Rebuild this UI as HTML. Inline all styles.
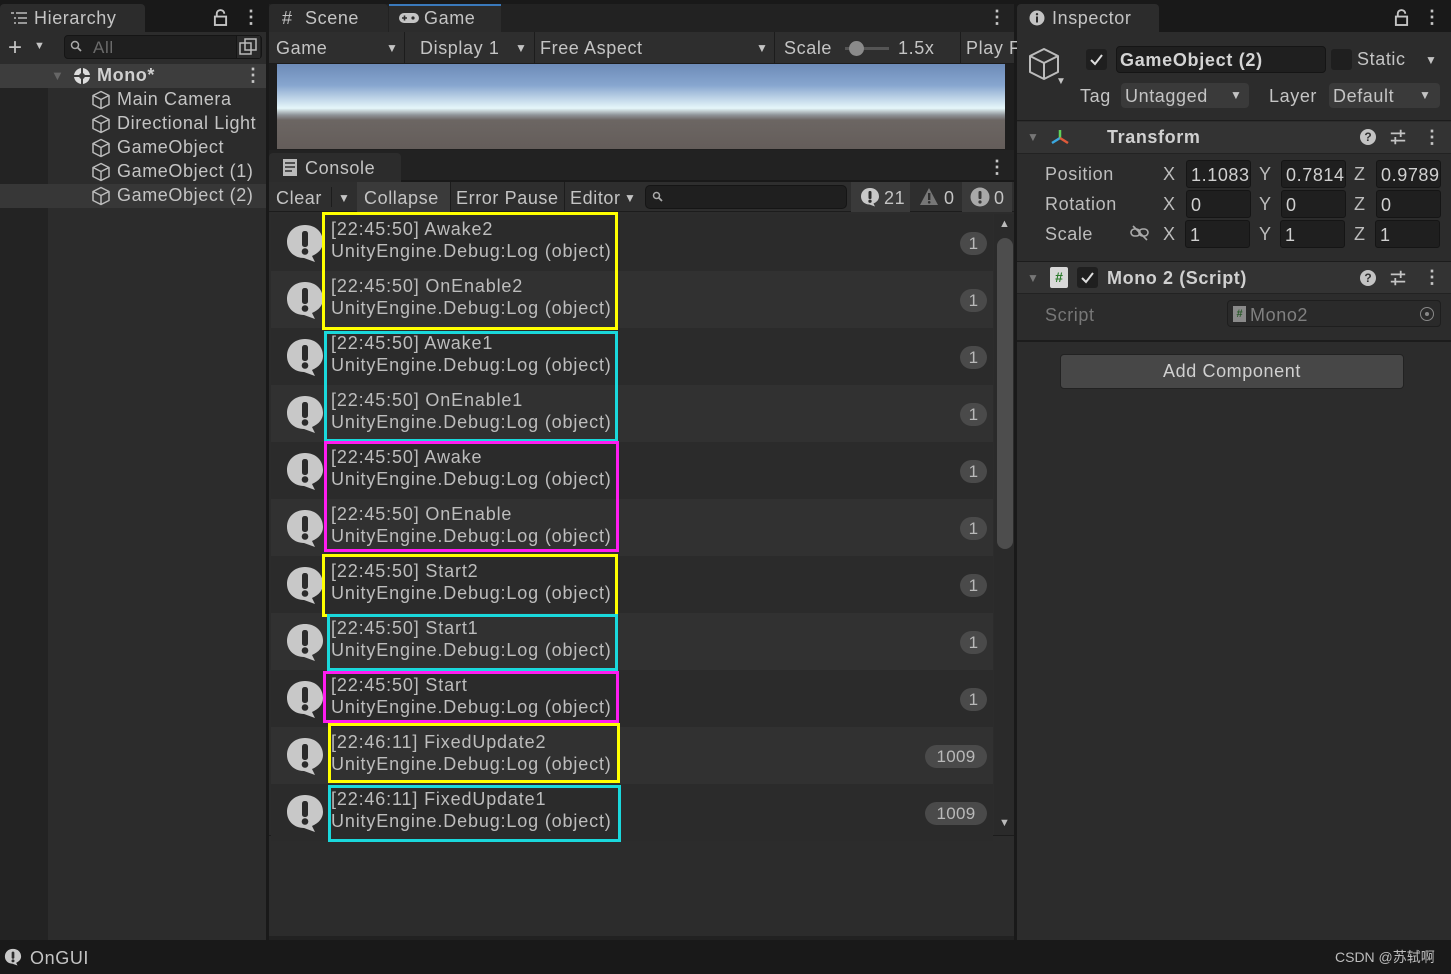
<!DOCTYPE html>
<html><head><meta charset="utf-8"><style>
*{margin:0;padding:0;box-sizing:border-box}
body{width:1451px;height:974px;background:#191919;position:relative;overflow:hidden;font-family:"Liberation Sans","Noto Sans CJK SC",sans-serif;color:#c4c4c4;font-size:18px;letter-spacing:.6px}
.a{position:absolute}
.t{position:absolute;white-space:nowrap;line-height:1}
.cube{position:absolute;width:20px;height:20px}
.row{position:absolute;left:271px;width:722px;height:57px}
.ic{position:absolute;left:14px;top:9px}
.l1,.l2{position:absolute;left:60px;white-space:nowrap;font-size:18px;color:#bdbdbd;letter-spacing:.85px;line-height:1}
.l1{top:6px}.l2{top:28px}
.cnt{position:absolute;top:18px;height:23px;border-radius:12px;background:#4a4a4a;color:#b9b9b9;font-size:17px;text-align:center;line-height:23px;letter-spacing:.3px}
.box{position:absolute;border:3px solid}
.fld{position:absolute;background:#1f1f1f;border:1px solid #151515;border-radius:3px;height:28px;font-size:18px;color:#d0d0d0;padding:4px 0 0 4px}
.lab{position:absolute;font-size:18px;color:#bdbdbd;white-space:nowrap}
</style></head><body>
<svg width="0" height="0" style="position:absolute"><defs>
<symbol id="cube" viewBox="0 0 20 20"><path d="M10 1.5 L18 5.5 L18 14.5 L10 18.5 L2 14.5 L2 5.5 Z M2 5.5 L10 9.5 L18 5.5 M10 9.5 L10 18.5" fill="none" stroke="#bcbcbc" stroke-width="1.5" stroke-linejoin="round"/></symbol>
<symbol id="info" viewBox="0 0 40 40"><path d="M20 2 C9 2 2 9.5 2 19 C2 28 9 35 19 35 L30 39 L27 33 C34 30 38 25 38 19 C38 9.5 31 2 20 2Z" fill="#c8c8c8"/><rect x="17" y="8" width="6" height="16" rx="2.5" fill="#2b2b2b"/><circle cx="20" cy="28.5" r="3.3" fill="#2b2b2b"/></symbol>
<symbol id="lock" viewBox="0 0 16 18"><path d="M4 8 V5 A4 4 0 0 1 12 5" fill="none" stroke="#c4c4c4" stroke-width="2"/><rect x="2" y="8" width="12" height="9" fill="none" stroke="#c4c4c4" stroke-width="2"/></symbol>
<symbol id="chk" viewBox="0 0 21 21"><rect width="21" height="21" rx="3" fill="#1f1f1f"/><path d="M5 11 L9 15 L16 6" fill="none" stroke="#ddd" stroke-width="2"/></symbol>
<symbol id="sl" viewBox="0 0 20 20"><path d="M2 6 H18 M2 14 H18" stroke="#c4c4c4" stroke-width="2"/><path d="M13 2 V10 M7 10 V18" stroke="#c4c4c4" stroke-width="2"/></symbol>
</defs></svg>

<!-- Hierarchy panel -->
<div class="a" style="left:0;top:32px;width:266px;height:908px;background:#2c2c2c"></div>
<div class="a" style="left:0;top:88px;width:48px;height:852px;background:#232323"></div>
<div class="a" style="left:0;top:4px;width:145px;height:28px;background:#2c2c2c;border-radius:4px 4px 0 0"></div>
<svg class="a" style="left:11px;top:12px" width="16" height="12"><path d="M0 1H3M5 1H16M3 6H5M7 6H16M3 11H5M7 11H16" stroke="#bbb" stroke-width="1.6"/></svg>
<div class="t" style="left:34px;top:9px;color:#c4c4c4">Hierarchy</div>
<svg class="a" style="left:213px;top:9px" width="15" height="17"><use href="#lock"/></svg>
<div class="t" style="left:242px;top:8px;font-weight:bold">⋮</div>
<div class="t" style="left:8px;top:36px;font-size:24px;color:#c4c4c4">+</div>
<div class="t" style="left:34px;top:41px;font-size:11px;color:#c4c4c4">▼</div>
<div class="a" style="left:64px;top:35px;width:198px;height:24px;background:#1f1f1f;border:1px solid #151515;border-radius:4px"></div>
<svg class="a" style="left:70px;top:40px" width="14" height="14"><circle cx="5" cy="5" r="3.5" fill="none" stroke="#aaa" stroke-width="1.5"/><path d="M7.5 7.5 L11 11" stroke="#aaa" stroke-width="1.8"/></svg>
<div class="t" style="left:93px;top:39px;color:#6b6b6b;font-size:17px">All</div>
<div class="a" style="left:236px;top:36px;width:24px;height:22px;background:#2a2a2a;border-left:1px solid #151515"></div>
<svg class="a" style="left:239px;top:38px" width="19" height="18"><rect x="1" y="5" width="11" height="11" fill="none" stroke="#bbb" stroke-width="1.5"/><rect x="6" y="1" width="11" height="11" fill="none" stroke="#bbb" stroke-width="1.5"/></svg>
<div class="a" style="left:0;top:64px;width:266px;height:24px;background:#3d3d3d"></div>
<div class="t" style="left:51px;top:69px;font-size:13px;color:#666">▼</div>
<svg class="a" style="left:72px;top:66px" width="20" height="20" viewBox="0 0 20 20"><circle cx="10" cy="10" r="8" fill="#ddd"/><path d="M10 2V18M2 10H18" stroke="#3d3d3d" stroke-width="2"/><circle cx="10" cy="10" r="3" fill="#3d3d3d"/></svg>
<div class="t" style="left:97px;top:66px;font-weight:bold;color:#d0d0d0">Mono*</div>
<div class="t" style="left:244px;top:66px;font-weight:bold">⋮</div>
<div class="a" style="left:0;top:184px;width:266px;height:24px;background:#373737"></div>
<svg class="cube" style="left:91px;top:90px"><use href="#cube"/></svg><div class="t" style="left:117px;top:90px">Main Camera</div>
<svg class="cube" style="left:91px;top:114px"><use href="#cube"/></svg><div class="t" style="left:117px;top:114px">Directional Light</div>
<svg class="cube" style="left:91px;top:138px"><use href="#cube"/></svg><div class="t" style="left:117px;top:138px">GameObject</div>
<svg class="cube" style="left:91px;top:162px"><use href="#cube"/></svg><div class="t" style="left:117px;top:162px">GameObject (1)</div>
<svg class="cube" style="left:91px;top:186px"><use href="#cube"/></svg><div class="t" style="left:117px;top:186px">GameObject (2)</div>

<!-- Game panel -->
<div class="a" style="left:269px;top:4px;width:745px;height:28px;background:#222"></div>
<div class="a" style="left:269px;top:4px;width:119px;height:28px;background:#2a2a2a;border-radius:4px 4px 0 0"></div>
<div class="t" style="left:282px;top:9px">#</div><div class="t" style="left:305px;top:9px">Scene</div>
<div class="a" style="left:389px;top:4px;width:112px;height:28px;background:#2c2c2c;border-top:2px solid #3a79bb"></div>
<svg class="a" style="left:398px;top:12px" width="22" height="12"><rect x="1" y="1" width="20" height="10" rx="5" fill="#c4c4c4"/><path d="M4 6H9M6.5 3.5V8.5" stroke="#2c2c2c" stroke-width="1.6"/><circle cx="15" cy="6" r="1.6" fill="#2c2c2c"/></svg>
<div class="t" style="left:424px;top:9px">Game</div>
<div class="t" style="left:988px;top:8px;font-weight:bold">⋮</div>
<div class="a" style="left:269px;top:32px;width:745px;height:32px;background:#2e2e2e;border-bottom:1px solid #1c1c1c"></div>
<div class="t" style="left:276px;top:39px">Game</div><div class="t" style="left:386px;top:42px;font-size:12px">▼</div>
<div class="a" style="left:404px;top:32px;width:1px;height:32px;background:#1c1c1c"></div>
<div class="t" style="left:420px;top:39px">Display 1</div><div class="t" style="left:515px;top:42px;font-size:12px">▼</div>
<div class="a" style="left:534px;top:32px;width:1px;height:32px;background:#1c1c1c"></div>
<div class="t" style="left:540px;top:39px">Free Aspect</div><div class="t" style="left:756px;top:42px;font-size:12px">▼</div>
<div class="a" style="left:774px;top:32px;width:1px;height:32px;background:#1c1c1c"></div>
<div class="t" style="left:784px;top:39px">Scale</div>
<div class="a" style="left:845px;top:47px;width:44px;height:3px;background:#555"></div>
<div class="a" style="left:849px;top:41px;width:15px;height:15px;border-radius:50%;background:#8a8a8a"></div>
<div class="t" style="left:898px;top:39px">1.5x</div>
<div class="a" style="left:960px;top:32px;width:1px;height:32px;background:#1c1c1c"></div>
<div class="t" style="left:966px;top:39px">Play F</div>
<div class="a" style="left:269px;top:64px;width:745px;height:86px;background:#1e1e1e"></div>
<div class="a" style="left:277px;top:64px;width:728px;height:85px;background:linear-gradient(180deg,#6d8bb8 0%,#87a6cf 25%,#c4d9ea 42%,#e6f7fa 52%,#8f9498 60%,#6c6663 66%,#645d5a 100%)"></div>

<!-- Console -->
<div class="a" style="left:269px;top:150px;width:745px;height:30px;background:#222"></div>
<div class="a" style="left:269px;top:153px;width:132px;height:29px;background:#2c2c2c;border-radius:4px 4px 0 0"></div>
<svg class="a" style="left:283px;top:159px" width="14" height="17"><rect x="0" y="0" width="14" height="17" fill="#bbb"/><path d="M2 4H12M2 8H12M2 12H9" stroke="#2c2c2c" stroke-width="1.5"/></svg>
<div class="t" style="left:305px;top:159px">Console</div>
<div class="t" style="left:988px;top:158px;font-weight:bold">⋮</div>
<div class="a" style="left:269px;top:182px;width:745px;height:30px;background:#2e2e2e;border-bottom:1px solid #1c1c1c"></div>
<div class="t" style="left:276px;top:189px">Clear</div>
<div class="a" style="left:331px;top:187px;width:1px;height:20px;background:#1c1c1c"></div>
<div class="t" style="left:338px;top:192px;font-size:12px">▼</div>
<div class="a" style="left:357px;top:182px;width:93px;height:30px;background:#3a3a3a"></div>
<div class="t" style="left:364px;top:189px">Collapse</div>
<div class="a" style="left:450px;top:182px;width:1px;height:30px;background:#1c1c1c"></div>
<div class="t" style="left:456px;top:189px">Error Pause</div>
<div class="a" style="left:564px;top:182px;width:1px;height:30px;background:#1c1c1c"></div>
<div class="t" style="left:570px;top:189px">Editor</div><div class="t" style="left:624px;top:192px;font-size:12px">▼</div>
<div class="a" style="left:645px;top:185px;width:202px;height:24px;background:#1f1f1f;border:1px solid #151515;border-radius:5px"></div>
<svg class="a" style="left:652px;top:191px" width="12" height="12"><circle cx="4.5" cy="4.5" r="3" fill="none" stroke="#aaa" stroke-width="1.5"/><path d="M6.5 6.5 L10 10" stroke="#aaa" stroke-width="1.8"/></svg>
<div class="a" style="left:851px;top:182px;width:59px;height:30px;background:#3a3a3a"></div>
<svg class="a" style="left:860px;top:187px" width="20" height="20"><use href="#info"/></svg><div class="t" style="left:884px;top:189px">21</div>
<svg class="a" style="left:919px;top:187px" width="20" height="20" viewBox="0 0 20 20"><path d="M10 1 L19 18 L1 18Z" fill="#777"/><rect x="9" y="6" width="2.4" height="7" fill="#2e2e2e"/><circle cx="10.2" cy="15.3" r="1.3" fill="#2e2e2e"/></svg><div class="t" style="left:944px;top:189px">0</div>
<div class="a" style="left:962px;top:182px;width:50px;height:30px;background:#3a3a3a"></div>
<svg class="a" style="left:970px;top:187px" width="20" height="20" viewBox="0 0 20 20"><circle cx="10" cy="10" r="9.5" fill="#a9a9a9"/><rect x="8.5" y="4" width="3" height="8" rx="1.3" fill="#3a3a3a"/><circle cx="10" cy="15" r="1.6" fill="#3a3a3a"/></svg><div class="t" style="left:994px;top:189px">0</div>

<div class="a" style="left:269px;top:212px;width:745px;height:726px;background:#2c2c2c"></div>
<div class="a" style="left:269px;top:835px;width:745px;height:1px;background:#1c1c1c"></div>
<div class="a" style="left:269px;top:936px;width:745px;height:4px;background:#222"></div>

<div class="row" style="top:214px;background:#2b2b2b"><svg class="ic" width="40" height="40"><use href="#info"/></svg><div class="l1">[22:45:50] Awake2</div><div class="l2">UnityEngine.Debug:Log (object)</div><div class="cnt" style="left:689px;width:27px">1</div></div>
<div class="row" style="top:271px;background:#313131"><svg class="ic" width="40" height="40"><use href="#info"/></svg><div class="l1">[22:45:50] OnEnable2</div><div class="l2">UnityEngine.Debug:Log (object)</div><div class="cnt" style="left:689px;width:27px">1</div></div>
<div class="row" style="top:328px;background:#2b2b2b"><svg class="ic" width="40" height="40"><use href="#info"/></svg><div class="l1">[22:45:50] Awake1</div><div class="l2">UnityEngine.Debug:Log (object)</div><div class="cnt" style="left:689px;width:27px">1</div></div>
<div class="row" style="top:385px;background:#313131"><svg class="ic" width="40" height="40"><use href="#info"/></svg><div class="l1">[22:45:50] OnEnable1</div><div class="l2">UnityEngine.Debug:Log (object)</div><div class="cnt" style="left:689px;width:27px">1</div></div>
<div class="row" style="top:442px;background:#2b2b2b"><svg class="ic" width="40" height="40"><use href="#info"/></svg><div class="l1">[22:45:50] Awake</div><div class="l2">UnityEngine.Debug:Log (object)</div><div class="cnt" style="left:689px;width:27px">1</div></div>
<div class="row" style="top:499px;background:#313131"><svg class="ic" width="40" height="40"><use href="#info"/></svg><div class="l1">[22:45:50] OnEnable</div><div class="l2">UnityEngine.Debug:Log (object)</div><div class="cnt" style="left:689px;width:27px">1</div></div>
<div class="row" style="top:556px;background:#2b2b2b"><svg class="ic" width="40" height="40"><use href="#info"/></svg><div class="l1">[22:45:50] Start2</div><div class="l2">UnityEngine.Debug:Log (object)</div><div class="cnt" style="left:689px;width:27px">1</div></div>
<div class="row" style="top:613px;background:#313131"><svg class="ic" width="40" height="40"><use href="#info"/></svg><div class="l1">[22:45:50] Start1</div><div class="l2">UnityEngine.Debug:Log (object)</div><div class="cnt" style="left:689px;width:27px">1</div></div>
<div class="row" style="top:670px;background:#2b2b2b"><svg class="ic" width="40" height="40"><use href="#info"/></svg><div class="l1">[22:45:50] Start</div><div class="l2">UnityEngine.Debug:Log (object)</div><div class="cnt" style="left:689px;width:27px">1</div></div>
<div class="row" style="top:727px;background:#313131"><svg class="ic" width="40" height="40"><use href="#info"/></svg><div class="l1">[22:46:11] FixedUpdate2</div><div class="l2">UnityEngine.Debug:Log (object)</div><div class="cnt" style="left:654px;width:62px">1009</div></div>
<div class="row" style="top:784px;background:#2b2b2b"><svg class="ic" width="40" height="40"><use href="#info"/></svg><div class="l1">[22:46:11] FixedUpdate1</div><div class="l2">UnityEngine.Debug:Log (object)</div><div class="cnt" style="left:654px;width:62px">1009</div></div>

<!-- scrollbar -->
<div class="a" style="left:994px;top:214px;width:20px;height:621px;background:#2a2a2a"></div>
<div class="t" style="left:999px;top:219px;font-size:11px;color:#bbb">▲</div>
<div class="a" style="left:997px;top:238px;width:16px;height:311px;background:#4d4d4d;border-radius:8px"></div>
<div class="t" style="left:999px;top:818px;font-size:11px;color:#bbb">▼</div>

<!-- highlight boxes -->
<div class="box" style="left:322px;top:212px;width:296px;height:118px;border-color:#ffff00"></div>
<div class="box" style="left:324px;top:331px;width:294px;height:111px;border-color:#1ad8dc"></div>
<div class="box" style="left:324px;top:441px;width:295px;height:111px;border-color:#ff1cf0"></div>
<div class="box" style="left:322px;top:554px;width:296px;height:63px;border-color:#ffff00"></div>
<div class="box" style="left:327px;top:614px;width:291px;height:57px;border-color:#1ad8dc"></div>
<div class="box" style="left:323px;top:671px;width:296px;height:52px;border-color:#ff1cf0"></div>
<div class="box" style="left:328px;top:723px;width:292px;height:60px;border-color:#ffff00"></div>
<div class="box" style="left:328px;top:785px;width:293px;height:57px;border-color:#1ad8dc"></div>

<!-- Inspector -->
<div class="a" style="left:1017px;top:32px;width:434px;height:908px;background:#2c2c2c"></div>
<div class="a" style="left:1017px;top:4px;width:142px;height:28px;background:#2c2c2c;border-radius:4px 4px 0 0"></div>
<svg class="a" style="left:1029px;top:10px" width="16" height="16" viewBox="0 0 16 16"><circle cx="8" cy="8" r="7.5" fill="#c4c4c4"/><rect x="7" y="6.5" width="2" height="6" fill="#2c2c2c"/><circle cx="8" cy="4.2" r="1.2" fill="#2c2c2c"/></svg>
<div class="t" style="left:1052px;top:9px">Inspector</div>
<svg class="a" style="left:1394px;top:9px" width="15" height="17"><use href="#lock"/></svg>
<div class="t" style="left:1423px;top:8px;font-weight:bold">⋮</div>
<div class="a" style="left:1017px;top:120px;width:434px;height:1px;background:#1c1c1c"></div>
<svg class="a" style="left:1027px;top:47px" width="34" height="34"><path d="M17 2 L31 9 L31 25 L17 32 L3 25 L3 9 Z M3 9 L17 16 L31 9 M17 16 L17 32" fill="none" stroke="#bcbcbc" stroke-width="2" stroke-linejoin="round"/></svg>
<div class="t" style="left:1056px;top:77px;font-size:10px">▼</div>
<svg class="a" style="left:1086px;top:49px" width="21" height="21"><use href="#chk"/></svg>
<div class="a" style="left:1116px;top:46px;width:210px;height:27px;background:#1f1f1f;border:1px solid #151515;border-radius:4px"></div>
<div class="t" style="left:1120px;top:51px;font-weight:bold;color:#d4d4d4;letter-spacing:.7px">GameObject (2)</div>
<div class="a" style="left:1331px;top:49px;width:21px;height:21px;background:#1f1f1f;border-radius:3px"></div>
<div class="t" style="left:1357px;top:50px">Static</div>
<div class="t" style="left:1425px;top:54px;font-size:12px">▼</div>
<div class="t" style="left:1080px;top:87px">Tag</div>
<div class="a" style="left:1121px;top:83px;width:128px;height:25px;background:#3a3a3a;border-radius:4px"></div>
<div class="t" style="left:1125px;top:87px">Untagged</div><div class="t" style="left:1230px;top:89px;font-size:12px">▼</div>
<div class="t" style="left:1269px;top:87px">Layer</div>
<div class="a" style="left:1329px;top:83px;width:111px;height:25px;background:#3a3a3a;border-radius:4px"></div>
<div class="t" style="left:1333px;top:87px">Default</div><div class="t" style="left:1419px;top:89px;font-size:12px">▼</div>

<div class="a" style="left:1017px;top:122px;width:434px;height:31px;background:#333"></div>
<div class="a" style="left:1017px;top:153px;width:434px;height:1px;background:#222"></div>
<div class="t" style="left:1027px;top:131px;font-size:12px;color:#777">▼</div>
<svg class="a" style="left:1049px;top:128px" width="22" height="20"><path d="M11 2 V10" stroke="#5fd25a" stroke-width="2.5"/><path d="M11 10 L3 15" stroke="#3aa8e0" stroke-width="2.5"/><path d="M11 10 L19 15" stroke="#e05a3a" stroke-width="2.5"/></svg>
<div class="t" style="left:1107px;top:128px;font-weight:bold;color:#d0d0d0">Transform</div>
<div class="a" style="left:1360px;top:129px;width:16px;height:16px;border-radius:50%;background:#c4c4c4;color:#333;font-size:12px;font-weight:bold;text-align:center;line-height:16px;letter-spacing:0">?</div>
<svg class="a" style="left:1389px;top:128px" width="18" height="18"><use href="#sl"/></svg><div class="t" style="left:1423px;top:128px;font-weight:bold">⋮</div>
<div class="lab" style="left:1045px;top:164px">Position</div>
<div class="lab" style="left:1045px;top:194px">Rotation</div>
<div class="lab" style="left:1045px;top:224px">Scale</div>
<svg class="a" style="left:1130px;top:225px" width="20" height="16"><rect x="1" y="4" width="9" height="7" rx="3.5" fill="none" stroke="#aaa" stroke-width="1.6"/><rect x="9" y="4" width="9" height="7" rx="3.5" fill="none" stroke="#aaa" stroke-width="1.6"/><path d="M3 1 L17 15" stroke="#aaa" stroke-width="1.6"/></svg>
<div class="lab" style="left:1163px;top:164px">X</div><div class="lab" style="left:1259px;top:164px">Y</div><div class="lab" style="left:1354px;top:164px">Z</div>
<div class="lab" style="left:1163px;top:194px">X</div><div class="lab" style="left:1259px;top:194px">Y</div><div class="lab" style="left:1354px;top:194px">Z</div>
<div class="lab" style="left:1163px;top:224px">X</div><div class="lab" style="left:1259px;top:224px">Y</div><div class="lab" style="left:1354px;top:224px">Z</div>
<div class="fld" style="left:1186px;top:160px;width:65px">1.1083</div>
<div class="fld" style="left:1281px;top:160px;width:65px">0.7814</div>
<div class="fld" style="left:1376px;top:160px;width:65px;overflow:hidden;white-space:nowrap">0.9789</div>
<div class="fld" style="left:1186px;top:190px;width:65px">0</div>
<div class="fld" style="left:1281px;top:190px;width:65px">0</div>
<div class="fld" style="left:1376px;top:190px;width:65px">0</div>
<div class="fld" style="left:1185px;top:220px;width:65px">1</div>
<div class="fld" style="left:1280px;top:220px;width:65px">1</div>
<div class="fld" style="left:1375px;top:220px;width:65px">1</div>
<div class="a" style="left:1017px;top:261px;width:434px;height:1px;background:#1c1c1c"></div>

<div class="a" style="left:1017px;top:262px;width:434px;height:31px;background:#333"></div>
<div class="a" style="left:1017px;top:293px;width:434px;height:1px;background:#222"></div>
<div class="t" style="left:1027px;top:272px;font-size:12px;color:#777">▼</div>
<div class="a" style="left:1050px;top:267px;width:18px;height:21px;background:#d8d8d8;border-radius:2px;color:#2a7a2a;font-size:14px;font-weight:bold;text-align:center;line-height:21px;letter-spacing:0">#</div>
<svg class="a" style="left:1077px;top:267px" width="21" height="21"><use href="#chk"/></svg>
<div class="t" style="left:1107px;top:269px;font-weight:bold;color:#d0d0d0">Mono 2 (Script)</div>
<div class="a" style="left:1360px;top:270px;width:16px;height:16px;border-radius:50%;background:#c4c4c4;color:#333;font-size:12px;font-weight:bold;text-align:center;line-height:16px;letter-spacing:0">?</div>
<svg class="a" style="left:1389px;top:269px" width="18" height="18"><use href="#sl"/></svg><div class="t" style="left:1423px;top:268px;font-weight:bold">⋮</div>
<div class="lab" style="left:1045px;top:305px;color:#777">Script</div>
<div class="a" style="left:1227px;top:300px;width:214px;height:27px;background:#2a2a2a;border:1px solid #1e1e1e;border-radius:4px"></div>
<div class="a" style="left:1233px;top:306px;width:13px;height:16px;background:#8a8a8a;color:#2a5a2a;font-size:11px;font-weight:bold;text-align:center;line-height:16px;letter-spacing:0">#</div>
<div class="t" style="left:1250px;top:306px;color:#808080">Mono2</div>
<div class="a" style="left:1420px;top:307px;width:14px;height:14px;border:1.5px solid #888;border-radius:50%"></div>
<div class="a" style="left:1425px;top:312px;width:4px;height:4px;background:#888;border-radius:50%"></div>
<div class="a" style="left:1017px;top:340px;width:434px;height:2px;background:#1c1c1c"></div>
<div class="a" style="left:1060px;top:354px;width:344px;height:35px;background:#474747;border:1px solid #222;border-radius:4px;text-align:center;line-height:33px;color:#d0d0d0">Add Component</div>

<!-- status bar -->
<svg class="a" style="left:4px;top:947px" width="18" height="20"><use href="#info"/></svg>
<div class="t" style="left:30px;top:949px;color:#c4c4c4">OnGUI</div>
<div class="t" style="left:1335px;top:950px;font-size:14px;color:#bdbdbd;letter-spacing:0">CSDN @苏轼啊</div>
</body></html>
